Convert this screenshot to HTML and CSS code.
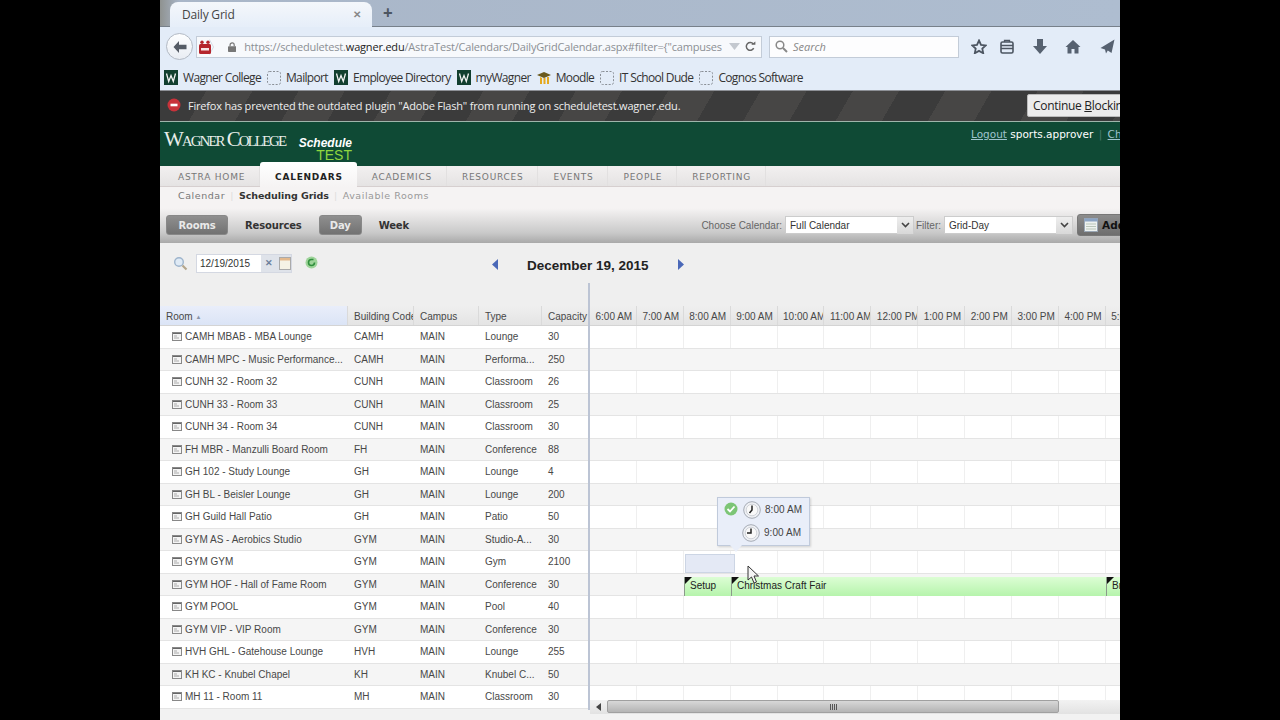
FILE: index.html
```html
<!DOCTYPE html>
<html lang="en">

<head>
    <meta charset="UTF-8" />
    <title>Daily Grid</title>
    <link rel="stylesheet" href="styles.css">
</head>

<body>
    <!-- shared icons -->
    <svg class="sprite" width="0" height="0">
        <symbol id="room" viewBox="0 0 10 9">
            <rect x="0.5" y="0.5" width="9" height="8" fill="#f4f4f4" stroke="#888" />
            <path d="M1 1.5h8" stroke="#666" />
            <path d="M2 4h3M2 6h5" stroke="#aaa" />
        </symbol>
        <symbol id="wfav" viewBox="0 0 14 15">
            <rect width="14" height="15" fill="#123f2f" />
            <path d="M2.5 3.5l2.2 8 2.3-6 2.3 6 2.2-8" fill="none" stroke="#f2f2f2" stroke-width="1.3" />
        </symbol>
        <symbol id="blank" viewBox="0 0 14 14">
            <rect x="0.5" y="0.5" width="13" height="13" rx="2" fill="none" stroke="#8a8f96" stroke-dasharray="2 1.5" />
        </symbol>
        <symbol id="clock" viewBox="0 0 18 18">
            <circle cx="9" cy="9" r="8.3" fill="#eef0f4" stroke="#a5abb5" />
            <circle cx="9" cy="9" r="5.8" fill="#f9f9f9" stroke="#d0d3d9" />
        </symbol>
    </svg>

    <div class="screen">
        <!-- browser -->
        <div class="tabstrip">
            <div class="tab">
                <span class="tab-title">Daily Grid</span>
                <span class="tab-close">✕</span>
            </div>
            <span class="tab-new">+</span>
        </div>

        <div class="navbar">
            <div class="back">
                <svg width="16" height="14" viewBox="0 0 16 14">
                    <path d="M7 1L1.5 7 7 13V9.2h7.5V4.8H7z" fill="#555c66" />
                </svg>
            </div>
            <svg class="plugin-icon" width="14" height="14" viewBox="0 0 14 14">
                <rect x="1" y="4" width="12" height="10" rx="1.5" fill="#b5262d" />
                <circle cx="4" cy="2.2" r="1.7" fill="#b5262d" />
                <circle cx="10" cy="2.2" r="1.7" fill="#b5262d" />
                <rect x="3" y="8" width="8" height="2.5" fill="#f7e6e6" />
            </svg>
            <div class="urlbar">
                <svg class="url-sep" width="6" height="20" viewBox="0 0 6 20">
                    <path d="M0.500 1l5 9-5 9" fill="none" stroke="#cdd5e0" />
                </svg>
                <svg width="10" height="12" viewBox="0 0 10 12">
                    <path d="M2.5 5V3.5a2.5 2.5 0 0 1 5 0V5" fill="none" stroke="#777" stroke-width="1.4" />
                    <rect y="5" width="10" height="7" rx="1" fill="#777" />
                </svg>
                <span class="url">https://scheduletest.<b>wagner.edu</b>/AstraTest/Calendars/DailyGridCalendar.aspx#filter={"campuses</span>
                <svg class="url-drop" width="11" height="7" viewBox="0 0 11 7">
                    <path d="M0 0h11L5.500 7z" fill="#c3c8cf" />
                </svg>
                <svg width="13" height="13" viewBox="0 0 13 13">
                    <path d="M10.500 8.500A4.700 4.700 0 1 1 10 3.500" fill="none" stroke="#666" stroke-width="1.800" />
                    <path d="M7.500 4.500h5v-4z" fill="#666" />
                </svg>
            </div>
            <div class="searchbar">
                <svg width="13" height="13" viewBox="0 0 13 13">
                    <circle cx="5" cy="5" r="3.800" fill="none" stroke="#888" stroke-width="1.500" />
                    <path d="M8 8l4 4" stroke="#888" stroke-width="2" />
                </svg>
                <span>Search</span>
            </div>
            <div class="nav-icons">
                <svg width="16" height="15" viewBox="0 0 16 15">
                    <path d="M8 1.500l2 4.300 4.700.6-3.400 3.200.9 4.600L8 11.900l-4.200 2.300.9-4.600L1.300 6.400 6 5.800z" fill="none" stroke="#4c5561" stroke-width="1.800" />
                </svg>
                <svg class="ni-list" width="14" height="15" viewBox="0 0 14 15">
                    <rect x="1" y="3" width="12" height="11" rx="1.500" fill="none" stroke="#4c5561" stroke-width="1.600" />
                    <path d="M4.500 3V1.500h5V3M1 6.500h12M1 9.500h12" fill="none" stroke="#4c5561" stroke-width="1.300" />
                </svg>
                <svg class="ni-down" width="14" height="15" viewBox="0 0 14 15">
                    <path d="M4 0h6v7h4l-7 8-7-8h4z" fill="#566170" />
                </svg>
                <svg class="ni-home" width="16" height="15" viewBox="0 0 16 15">
                    <path d="M8 1L0.500 8h2v6.500h4V10h3v4.500h4V8h2z" fill="#566170" />
                </svg>
                <svg class="ni-send" width="15" height="15" viewBox="0 0 15 15">
                    <path d="M14.500 0.500L0.500 9l4.500 1.500 1 4 1.800-3 3.700 2.500z" fill="#566170" />
                </svg>
            </div>
        </div>

        <div class="bookmarks">
            <span class="bm"><svg width="14" height="15"><use href="#wfav" /></svg>Wagner College</span>
            <span class="bm"><svg width="14" height="14"><use href="#blank" /></svg>Mailport</span>
            <span class="bm"><svg width="14" height="15"><use href="#wfav" /></svg>Employee Directory</span>
            <span class="bm"><svg width="14" height="15"><use href="#wfav" /></svg>myWagner</span>
            <span class="bm"><svg width="14" height="14" viewBox="0 0 14 14">
                    <path d="M0 4l7-3 7 3-7 3z" fill="#6b5a1e" />
                    <path d="M3 6v7h2V7M6.500 7v6h2V7M10 6v7h2V6" fill="#e5a91f" />
                </svg>Moodle</span>
            <span class="bm"><svg width="14" height="14"><use href="#blank" /></svg>IT School Dude</span>
            <span class="bm"><svg width="14" height="14"><use href="#blank" /></svg>Cognos Software</span>
        </div>

        <div class="notice">
            <svg width="14" height="14" viewBox="0 0 14 14">
                <circle cx="7" cy="7" r="6.500" fill="#c8323a" />
                <rect x="3.500" y="5.700" width="7" height="2.600" fill="#fff" />
            </svg>
            <span class="notice-text">Firefox has prevented the outdated plugin "Adobe Flash" from running on scheduletest.wagner.edu.</span>
            <button class="notice-btn">Continue <u>B</u>locking...</button>
        </div>

        <!-- page header -->
        <div class="header">
            <div class="logo">Wagner College</div>
            <div class="product">
                <span class="product-name">Schedule</span>
                <span class="product-env">TEST</span>
            </div>
            <div class="user">
                <a>Logout</a> sports.approver <i>|</i> <a>Change</a>
            </div>
        </div>

        <div class="menu">
            <a>ASTRA HOME</a>
            <a class="active">CALENDARS</a>
            <a>ACADEMICS</a>
            <a>RESOURCES</a>
            <a>EVENTS</a>
            <a>PEOPLE</a>
            <a>REPORTING</a>
        </div>

        <div class="toolarea">
            <div class="submenu">
                <a>Calendar</a><i>|</i><a class="current">Scheduling Grids</a><i>|</i><a class="muted">Available Rooms</a>
            </div>
            <div class="toolbar">
                <button class="tbtn on">Rooms</button>
                <button class="tbtn">Resources</button>
                <button class="tbtn on day">Day</button>
                <button class="tbtn">Week</button>
                <label class="cal-label">Choose Calendar:</label>
                <div class="combo"><span>Full Calendar</span><em><svg width="9" height="6" viewBox="0 0 9 6"><path d="M1 1l3.500 3.500L8 1" fill="none" stroke="#444" stroke-width="1.600" /></svg></em></div>
                <label>Filter:</label>
                <div class="combo"><span>Grid-Day</span><em><svg width="9" height="6" viewBox="0 0 9 6"><path d="M1 1l3.500 3.500L8 1" fill="none" stroke="#444" stroke-width="1.600" /></svg></em></div>
                <button class="add">
                    <svg width="14" height="14" viewBox="0 0 14 14">
                        <rect x="0.500" y="0.500" width="13" height="13" fill="#eef2f0" stroke="#9aa7b5" />
                        <rect x="0.500" y="0.500" width="13" height="3" fill="#8ba4c4" />
                        <path d="M2 6h10M2 8.500h10M2 11h10" stroke="#b9c6b9" />
                    </svg>Add Event
                </button>
            </div>
        </div>

        <div class="datebar">
            <svg class="date-search" width="15" height="15" viewBox="0 0 15 15">
                <circle cx="6" cy="6" r="4.300" fill="#dfeaf5" stroke="#9db4cc" stroke-width="1.400" />
                <path d="M9.500 9.500l4 4" stroke="#b4a68c" stroke-width="2.200" />
            </svg>
            <div class="date-input">
                <span class="date-val">12/19/2015</span>
                <span class="date-clear">✕</span>
                <span class="date-cal">
                    <svg width="12" height="13" viewBox="0 0 12 13">
                        <rect x="0.500" y="0.500" width="11" height="12" fill="#f6f3e6" stroke="#aaa" />
                        <rect x="1" y="1" width="10" height="2.500" fill="#e3b98d" />
                    </svg>
                </span>
            </div>
            <svg class="date-refresh" width="13" height="13" viewBox="0 0 13 13">
                <circle cx="6.500" cy="6.500" r="6" fill="#9ed49a" />
                <path d="M9.500 6.500a3 3 0 1 1-3-3h2" fill="none" stroke="#2f8f3c" stroke-width="1.600" />
            </svg>
            <svg class="date-prev" width="6" height="11" viewBox="0 0 6 11"><path d="M6 0v11L0 5.500z" fill="#4a68b8" /></svg>
            <span class="date-title">December 19, 2015</span>
            <svg class="date-next" width="6" height="11" viewBox="0 0 6 11"><path d="M0 0v11l6-5.500z" fill="#4a68b8" /></svg>
        </div>

        <!-- daily grid -->
        <div class="grid">
            <div class="row head">
                <div class="sorted">Room <small>▲</small></div>
                <div>Building Code</div>
                <div>Campus</div>
                <div>Type</div>
                <div>Capacity</div>
                <div class="hours">
                    <span>6:00 AM</span><span>7:00 AM</span><span>8:00 AM</span><span>9:00 AM</span><span>10:00 AM</span><span>11:00 AM</span><span>12:00 PM</span><span>1:00 PM</span><span>2:00 PM</span><span>3:00 PM</span><span>4:00 PM</span><span>5:00 PM</span>
                </div>
            </div>

            <div class="row">
                <div class="room"><svg width="10" height="9"><use href="#room" /></svg>CAMH MBAB - MBA Lounge</div>
                <div>CAMH</div><div>MAIN</div><div>Lounge</div><div>30</div><div class="slots"></div>
            </div>
            <div class="row">
                <div class="room"><svg width="10" height="9"><use href="#room" /></svg>CAMH MPC - Music Performance...</div>
                <div>CAMH</div><div>MAIN</div><div>Performa...</div><div>250</div><div class="slots"></div>
            </div>
            <div class="row">
                <div class="room"><svg width="10" height="9"><use href="#room" /></svg>CUNH 32 - Room 32</div>
                <div>CUNH</div><div>MAIN</div><div>Classroom</div><div>26</div><div class="slots"></div>
            </div>
            <div class="row">
                <div class="room"><svg width="10" height="9"><use href="#room" /></svg>CUNH 33 - Room 33</div>
                <div>CUNH</div><div>MAIN</div><div>Classroom</div><div>25</div><div class="slots"></div>
            </div>
            <div class="row">
                <div class="room"><svg width="10" height="9"><use href="#room" /></svg>CUNH 34 - Room 34</div>
                <div>CUNH</div><div>MAIN</div><div>Classroom</div><div>30</div><div class="slots"></div>
            </div>
            <div class="row">
                <div class="room"><svg width="10" height="9"><use href="#room" /></svg>FH MBR - Manzulli Board Room</div>
                <div>FH</div><div>MAIN</div><div>Conference</div><div>88</div><div class="slots"></div>
            </div>
            <div class="row">
                <div class="room"><svg width="10" height="9"><use href="#room" /></svg>GH 102 - Study Lounge</div>
                <div>GH</div><div>MAIN</div><div>Lounge</div><div>4</div><div class="slots"></div>
            </div>
            <div class="row">
                <div class="room"><svg width="10" height="9"><use href="#room" /></svg>GH BL - Beisler Lounge</div>
                <div>GH</div><div>MAIN</div><div>Lounge</div><div>200</div><div class="slots"></div>
            </div>
            <div class="row">
                <div class="room"><svg width="10" height="9"><use href="#room" /></svg>GH Guild Hall Patio</div>
                <div>GH</div><div>MAIN</div><div>Patio</div><div>50</div><div class="slots"></div>
            </div>
            <div class="row">
                <div class="room"><svg width="10" height="9"><use href="#room" /></svg>GYM AS - Aerobics Studio</div>
                <div>GYM</div><div>MAIN</div><div>Studio-A...</div><div>30</div><div class="slots"></div>
            </div>
            <div class="row">
                <div class="room"><svg width="10" height="9"><use href="#room" /></svg>GYM GYM</div>
                <div>GYM</div><div>MAIN</div><div>Gym</div><div>2100</div>
                <div class="slots">
                    <div class="selection"></div>
                    <div class="pop">
                        <div class="pop-line">
                            <svg class="pop-ok" width="14" height="14" viewBox="0 0 14 14">
                                <circle cx="7" cy="7" r="6.500" fill="#7cc576" />
                                <path d="M3.500 7l2.500 2.500 4.500-5" fill="none" stroke="#fff" stroke-width="1.800" />
                            </svg>
                            <svg width="18" height="18" viewBox="0 0 18 18">
                                <use href="#clock" />
                                <path d="M9 4.500V9L6.500 12" fill="none" stroke="#222" stroke-width="1.500" />
                            </svg>
                            <span>8:00 AM</span>
                        </div>
                        <div class="pop-line second">
                            <svg width="18" height="18" viewBox="0 0 18 18">
                                <use href="#clock" />
                                <path d="M9 4.500V9H5" fill="none" stroke="#222" stroke-width="1.500" />
                            </svg>
                            <span>9:00 AM</span>
                        </div>
                    </div>
                </div>
            </div>
            <div class="row">
                <div class="room"><svg width="10" height="9"><use href="#room" /></svg>GYM HOF - Hall of Fame Room</div>
                <div>GYM</div><div>MAIN</div><div>Conference</div><div>30</div>
                <div class="slots">
                    <div class="event setup">Setup</div>
                    <div class="event craft">Christmas Craft Fair</div>
                    <div class="event next">Break</div>
                </div>
            </div>
            <div class="row">
                <div class="room"><svg width="10" height="9"><use href="#room" /></svg>GYM POOL</div>
                <div>GYM</div><div>MAIN</div><div>Pool</div><div>40</div><div class="slots"></div>
            </div>
            <div class="row">
                <div class="room"><svg width="10" height="9"><use href="#room" /></svg>GYM VIP - VIP Room</div>
                <div>GYM</div><div>MAIN</div><div>Conference</div><div>30</div><div class="slots"></div>
            </div>
            <div class="row">
                <div class="room"><svg width="10" height="9"><use href="#room" /></svg>HVH GHL - Gatehouse Lounge</div>
                <div>HVH</div><div>MAIN</div><div>Lounge</div><div>255</div><div class="slots"></div>
            </div>
            <div class="row">
                <div class="room"><svg width="10" height="9"><use href="#room" /></svg>KH KC - Knubel Chapel</div>
                <div>KH</div><div>MAIN</div><div>Knubel C...</div><div>50</div><div class="slots"></div>
            </div>
            <div class="row">
                <div class="room"><svg width="10" height="9"><use href="#room" /></svg>MH 11 - Room 11</div>
                <div>MH</div><div>MAIN</div><div>Classroom</div><div>30</div><div class="slots"></div>
            </div>

            <div class="splitter"></div>

            <div class="hscroll">
                <svg class="hscroll-left" width="5" height="8" viewBox="0 0 5 8"><path d="M5 0v8L0 4z" fill="#444" /></svg>
                <div class="hscroll-thumb"><span></span><span></span><span></span><span></span></div>
            </div>

            <svg class="cursor" width="13" height="19" viewBox="0 0 13 19">
                <path d="M1 1v14l3.500-3 2.500 6 2.500-1-2.500-6h4.500z" fill="#f4f4f4" stroke="#333" stroke-width="1" />
            </svg>
        </div>
    </div>
</body>

</html>
```

FILE: styles.css
```css
* {
    margin: 0;
    padding: 0;
    box-sizing: border-box;
}

body {
    background: #000;
    font-family: "Liberation Sans", Arial, sans-serif;
    overflow: hidden;
}

.sprite {
    position: absolute;
}

.screen {
    width: 960px;
    height: 720px;
    margin: 0 auto;
    overflow: hidden;
    background: #efefef;
    position: relative;
}

/* browser */
.tabstrip {
    height: 27px;
    display: flex;
    align-items: flex-end;
    padding-left: 10px;
    background: linear-gradient(90deg, #8f9290 0, #a9b6c8 20px, #aebdd0 100%);
    border-bottom: 1px solid #77808a;
}

.tab {
    width: 202px;
    height: 25px;
    display: flex;
    align-items: center;
    justify-content: space-between;
    padding: 0 11px 1px 12px;
    background: linear-gradient(#f4f7fb, #e6eef9);
    border-radius: 8px 8px 0 0;
    font: 12px "Open Sans", sans-serif;
    letter-spacing: -0.2px;
    color: #444;
    margin-bottom: -1px;
}

.tab-close {
    font-size: 10px;
    font-weight: bold;
    color: #888;
}

.tab-new {
    font: bold 17px "Open Sans", sans-serif;
    color: #4c5561;
    margin: 0 0 3px 11px;
    line-height: 20px;
}

.navbar {
    height: 37px;
    display: flex;
    align-items: center;
    padding: 2px 0 0 6px;
    background: #e3ecf8;
    font: 11px "Open Sans", sans-serif;
}

.back {
    width: 27px;
    height: 27px;
    border-radius: 50%;
    border: 1px solid #b3bac4;
    background: linear-gradient(#fdfeff, #e9edf3);
    display: flex;
    align-items: center;
    justify-content: center;
    position: relative;
    z-index: 1;
}

.plugin-icon {
    position: relative;
    z-index: 1;
    margin-left: 5px;
}

.urlbar {
    width: 566px;
    height: 22px;
    margin-left: -16px;
    padding: 0 5px 0 12px;
    display: flex;
    align-items: center;
    background: #f7f9fc;
    border: 1px solid #c3ccd8;
    color: #8b8f94;
}

.url-sep {
    margin-right: 14px;
}

.url {
    margin-left: 8px;
    width: 481px;
    flex: none;
    white-space: nowrap;
    overflow: hidden;
    letter-spacing: -0.19px;
}

.url b {
    font-weight: normal;
    color: #222;
}

.url-drop {
    margin: 0 5px 0 4px;
    flex: none;
}

.searchbar {
    width: 190px;
    height: 22px;
    margin-left: 7px;
    padding-left: 5px;
    display: flex;
    align-items: center;
    gap: 5px;
    background: #fdfdfe;
    border: 1px solid #c3ccd8;
    color: #888;
    font-style: italic;
}

.nav-icons {
    display: flex;
    align-items: center;
    margin-left: 12px;
}

.ni-list {
    margin-left: 13px;
}

.ni-down {
    margin-left: 19px;
}

.ni-home {
    margin-left: 18px;
}

.ni-send {
    margin-left: 19px;
}

.bookmarks {
    height: 27px;
    display: flex;
    align-items: center;
    padding: 1px 0 0 4px;
    gap: 6px;
    background: #e3ecf8;
    border-bottom: 1px solid #8d9096;
    font: 12px "Open Sans", sans-serif;
    color: #333;
}

.bm {
    display: flex;
    align-items: center;
    gap: 5px;
    white-space: nowrap;
    letter-spacing: -0.66px;
}

.notice {
    height: 31px;
    display: flex;
    align-items: center;
    padding: 0 0 2px 7px;
    background: repeating-linear-gradient(120deg, #3b3b3b 0, #3b3b3b 40px, #474645 40px, #474645 80px);
    border-bottom: 1px solid #9fb5ab;
    color: #eee;
    font: 11px "Open Sans", sans-serif;
}

.notice-text {
    margin-left: 7px;
    white-space: nowrap;
    letter-spacing: -0.2px;
}

.notice-btn {
    margin-left: auto;
    flex: none;
    width: 110px;
    height: 23px;
    margin-right: -17px;
    padding-left: 5px;
    text-align: left;
    background: #ececec;
    border: 1px solid #bbb;
    border-radius: 2px;
    font: 12px "Open Sans", sans-serif;
    color: #222;
    white-space: nowrap;
    letter-spacing: -0.3px;
}

/* page header */
.header {
    height: 44px;
    display: flex;
    background: #0f4a35;
    color: #fff;
}

.logo {
    font: 21px "Liberation Serif", serif;
    font-variant: small-caps;
    letter-spacing: -2px;
    margin: 5px 0 0 4px;
    width: 134px;
    white-space: nowrap;
    color: #e8eeea;
}

.product {
    width: 54px;
    display: flex;
    flex-direction: column;
    align-items: flex-end;
    margin-top: 15px;
}

.product-name {
    font: italic bold 12px/12px "Liberation Sans", sans-serif;
    white-space: nowrap;
}

.product-env {
    font-size: 14px;
    line-height: 12px;
    color: #8fd63f;
}

.user {
    margin: 6px 0 0 auto;
    width: 149px;
    font: 10.500px "DejaVu Sans", sans-serif;
    white-space: nowrap;
    overflow: hidden;
}

.user a {
    color: #9fc4cf;
    text-decoration: underline;
}

.user i {
    font-style: normal;
    color: #4a7a68;
    margin: 0 2px;
}

.menu {
    height: 21px;
    display: flex;
    align-items: center;
    padding-left: 3px;
    background: linear-gradient(#f2f0f0, #e5e3e3);
    border-bottom: 1px solid #d6cfcf;
    font: 9px "DejaVu Sans", sans-serif;
    letter-spacing: 0.75px;
    color: #777;
}

.menu a {
    height: 20px;
    line-height: 22px;
    padding: 0 14px 0 15px;
    border-right: 1px solid #e2e0e0;
    white-space: nowrap;
}

.menu .active {
    height: 25px;
    margin: -4px 0 -1px 0;
    line-height: 30px;
    background: linear-gradient(#ffffff, #f5f3f3);
    border: 0;
    font-weight: bold;
    color: #222;
    border-radius: 3px 3px 0 0;
}

.toolarea {
    height: 56px;
    background: linear-gradient(#f5f3f3 0, #f5f3f3 38%, #c9c9c9 82%, #a9a9a9 100%);
}

.submenu {
    height: 20px;
    padding: 0 0 4px 18px;
    display: flex;
    align-items: center;
    font: 9.500px "DejaVu Sans", sans-serif;
    letter-spacing: 0.55px;
    color: #777;
}

.submenu i {
    font-style: normal;
    color: #ddd;
    margin: 0 5px;
}

.submenu .current {
    color: #333;
    font-weight: bold;
    letter-spacing: -0.05px;
}

.submenu .muted {
    color: #999;
}

.toolbar {
    height: 36px;
    display: flex;
    align-items: center;
    padding: 0 0 0 6px;
    font-size: 10px;
    color: #666;
    white-space: nowrap;
}

.tbtn {
    height: 20px;
    padding: 0 13px;
    margin-right: 4px;
    border: 0;
    background: none;
    font: bold 10px "DejaVu Sans", sans-serif;
    letter-spacing: -0.15px;
    color: #333;
}

.tbtn.on {
    width: 62px;
    background: linear-gradient(#8f8f8f, #727272);
    border: 1px solid #888;
    border-radius: 3px;
    color: #e9e9e9;
    margin-right: 4px;
    padding: 0;
}

.tbtn.day {
    width: 43px;
}

.cal-label {
    margin-left: auto;
}

.combo {
    width: 129px;
    height: 18px;
    margin: 0 2px 0 3px;
    display: flex;
    align-items: center;
    justify-content: space-between;
    padding-left: 4px;
    background: #fff;
    border: 1px solid #ccc;
    color: #333;
}

.combo em {
    width: 16px;
    height: 17px;
    display: flex;
    align-items: center;
    justify-content: center;
    background: linear-gradient(#eee, #d8d8d8);
}

.add {
    width: 90px;
    flex: none;
    height: 22px;
    margin: 0 -47px 0 2px;
    padding-left: 6px;
    display: flex;
    align-items: center;
    gap: 4px;
    background: linear-gradient(#8c8c8c, #6e6e6e);
    border: 1px solid #777;
    border-radius: 3px;
    font: bold 10.500px "DejaVu Sans", sans-serif;
    color: #111;
    white-space: nowrap;
    overflow: hidden;
}

.add svg {
    flex: none;
}

.datebar {
    height: 63px;
    display: flex;
    align-items: flex-start;
    padding: 11px 0 0 13px;
    background: #efefef;
}

.date-search {
    margin-top: 2px;
}

.date-input {
    display: flex;
    width: 96px;
    height: 19px;
    margin-left: 8px;
    border: 1px solid #d4d8e2;
    background: #dfe3ea;
}

.date-val {
    width: 64px;
    line-height: 17px;
    padding-left: 3px;
    background: #fff;
    font-size: 10px;
    color: #333;
}

.date-clear {
    width: 16px;
    text-align: center;
    font-size: 9px;
    font-weight: bold;
    line-height: 17px;
    color: #6c7f9c;
}

.date-cal {
    flex: 1;
    padding: 2px 0 0 2px;
    line-height: 0;
}

.date-refresh {
    margin: 2px 0 0 13px;
}

.date-prev {
    margin: 5px 0 0 174px;
}

.date-title {
    margin: 4px 0 0 29px;
    width: 125px;
    font-size: 13.500px;
    font-weight: bold;
    color: #222;
    white-space: nowrap;
}

.date-next {
    margin: 5px 0 0 26px;
}

/* daily grid */
.grid {
    position: relative;
    height: 414px;
    background: #f2f2f2;
}

.row {
    display: grid;
    grid-template-columns: 188px 66px 65px 63px 48px 530px;
    height: 22.500px;
    background: #fff;
    border-bottom: 1px solid #e4e4e4;
    font-size: 10px;
    line-height: 22px;
    color: #484848;
}

.row:nth-child(odd) {
    background: #f5f5f5;
}

.row > div {
    padding-left: 6px;
    white-space: nowrap;
    overflow: hidden;
}

.row .room {
    padding-left: 12px;
    display: flex;
    align-items: flex-start;
    gap: 3px;
}

.room svg {
    flex: none;
    margin-top: 6px;
}

.row .slots {
    position: relative;
    padding: 0;
    overflow: visible;
    background: repeating-linear-gradient(90deg, transparent 0, transparent 45.900px, #efefef 45.900px, #efefef 46.900px);
}

.row:nth-child(odd) .slots {
    background: none;
}

.row.head {
    height: 20px;
    line-height: 21px;
    background: linear-gradient(#efefef, #e4e4e4);
    border-bottom: 1px solid #d4d4d4;
}

.row.head > div {
    border-right: 1px solid #dadada;
}

.row.head .sorted {
    background: linear-gradient(#e9eefa, #dbe4f6);
}

.sorted small {
    font-size: 6px;
    color: #8a94a8;
    vertical-align: 1px;
}

.row.head .hours {
    display: flex;
    padding: 0;
    border: 0;
}

.hours span {
    flex: none;
    width: 46.900px;
    padding-left: 5.500px;
    border-right: 1px solid #dadada;
    overflow: hidden;
}

.selection {
    position: absolute;
    left: 95px;
    top: 3px;
    width: 50px;
    height: 19px;
    background: #e4e9f5;
    border: 1px solid #ccd5e4;
}

.pop {
    position: absolute;
    left: 127px;
    bottom: 27px;
    width: 93px;
    height: 49px;
    padding: 1px 0 0 6px;
    background: #e9eef9;
    border: 1px solid #c0cadb;
    box-shadow: 1px 1px 2px rgba(0, 0, 0, 0.15);
    font-size: 10px;
    color: #444;
}

.pop::after {
    content: "";
    position: absolute;
    left: 12px;
    bottom: -7px;
    width: 0;
    height: 0;
    border-left: 6px solid transparent;
    border-right: 6px solid transparent;
    border-top: 7px solid #e9eef9;
}

.pop-line {
    display: flex;
    align-items: center;
    height: 23px;
}

.pop-line span {
    margin-left: 4px;
    letter-spacing: 0.05px;
}

.pop-ok {
    margin-right: 5px;
    margin-top: -3px;
}

.pop-line.second {
    padding-left: 18px;
}

.event {
    position: absolute;
    top: 3px;
    height: 19px;
    line-height: 18px;
    padding-left: 5px;
    background: linear-gradient(#dcfdd4, #b6f4ac);
    border-left: 1px solid #8a9a8a;
    color: #222;
    overflow: hidden;
    white-space: nowrap;
}

.event::before {
    content: "";
    position: absolute;
    left: 0;
    top: 0;
    border-top: 7px solid #111;
    border-right: 7px solid transparent;
}

.setup {
    left: 94px;
    width: 47px;
}

.craft {
    left: 141px;
    width: 375px;
}

.next {
    left: 516px;
    width: 60px;
}

.splitter {
    position: absolute;
    left: 428px;
    top: -23px;
    bottom: 10px;
    width: 2px;
    background: #bcc4d4;
}

.hscroll {
    position: absolute;
    left: 430px;
    top: 394px;
    right: 0;
    height: 14px;
    background: linear-gradient(#f2f2f2, #e2e2e2);
}

.hscroll-left {
    position: absolute;
    left: 6px;
    top: 3px;
}

.hscroll-thumb {
    position: absolute;
    left: 17px;
    top: 0;
    width: 452px;
    height: 13px;
    display: flex;
    align-items: center;
    justify-content: center;
    gap: 1px;
    background: linear-gradient(#d8d8d8, #b4b4b4);
    border: 1px solid #a0a0a0;
    border-radius: 2px;
}

.hscroll-thumb span {
    width: 1px;
    height: 6px;
    background: #555;
}

.cursor {
    position: absolute;
    left: 587px;
    top: 259px;
}
```
